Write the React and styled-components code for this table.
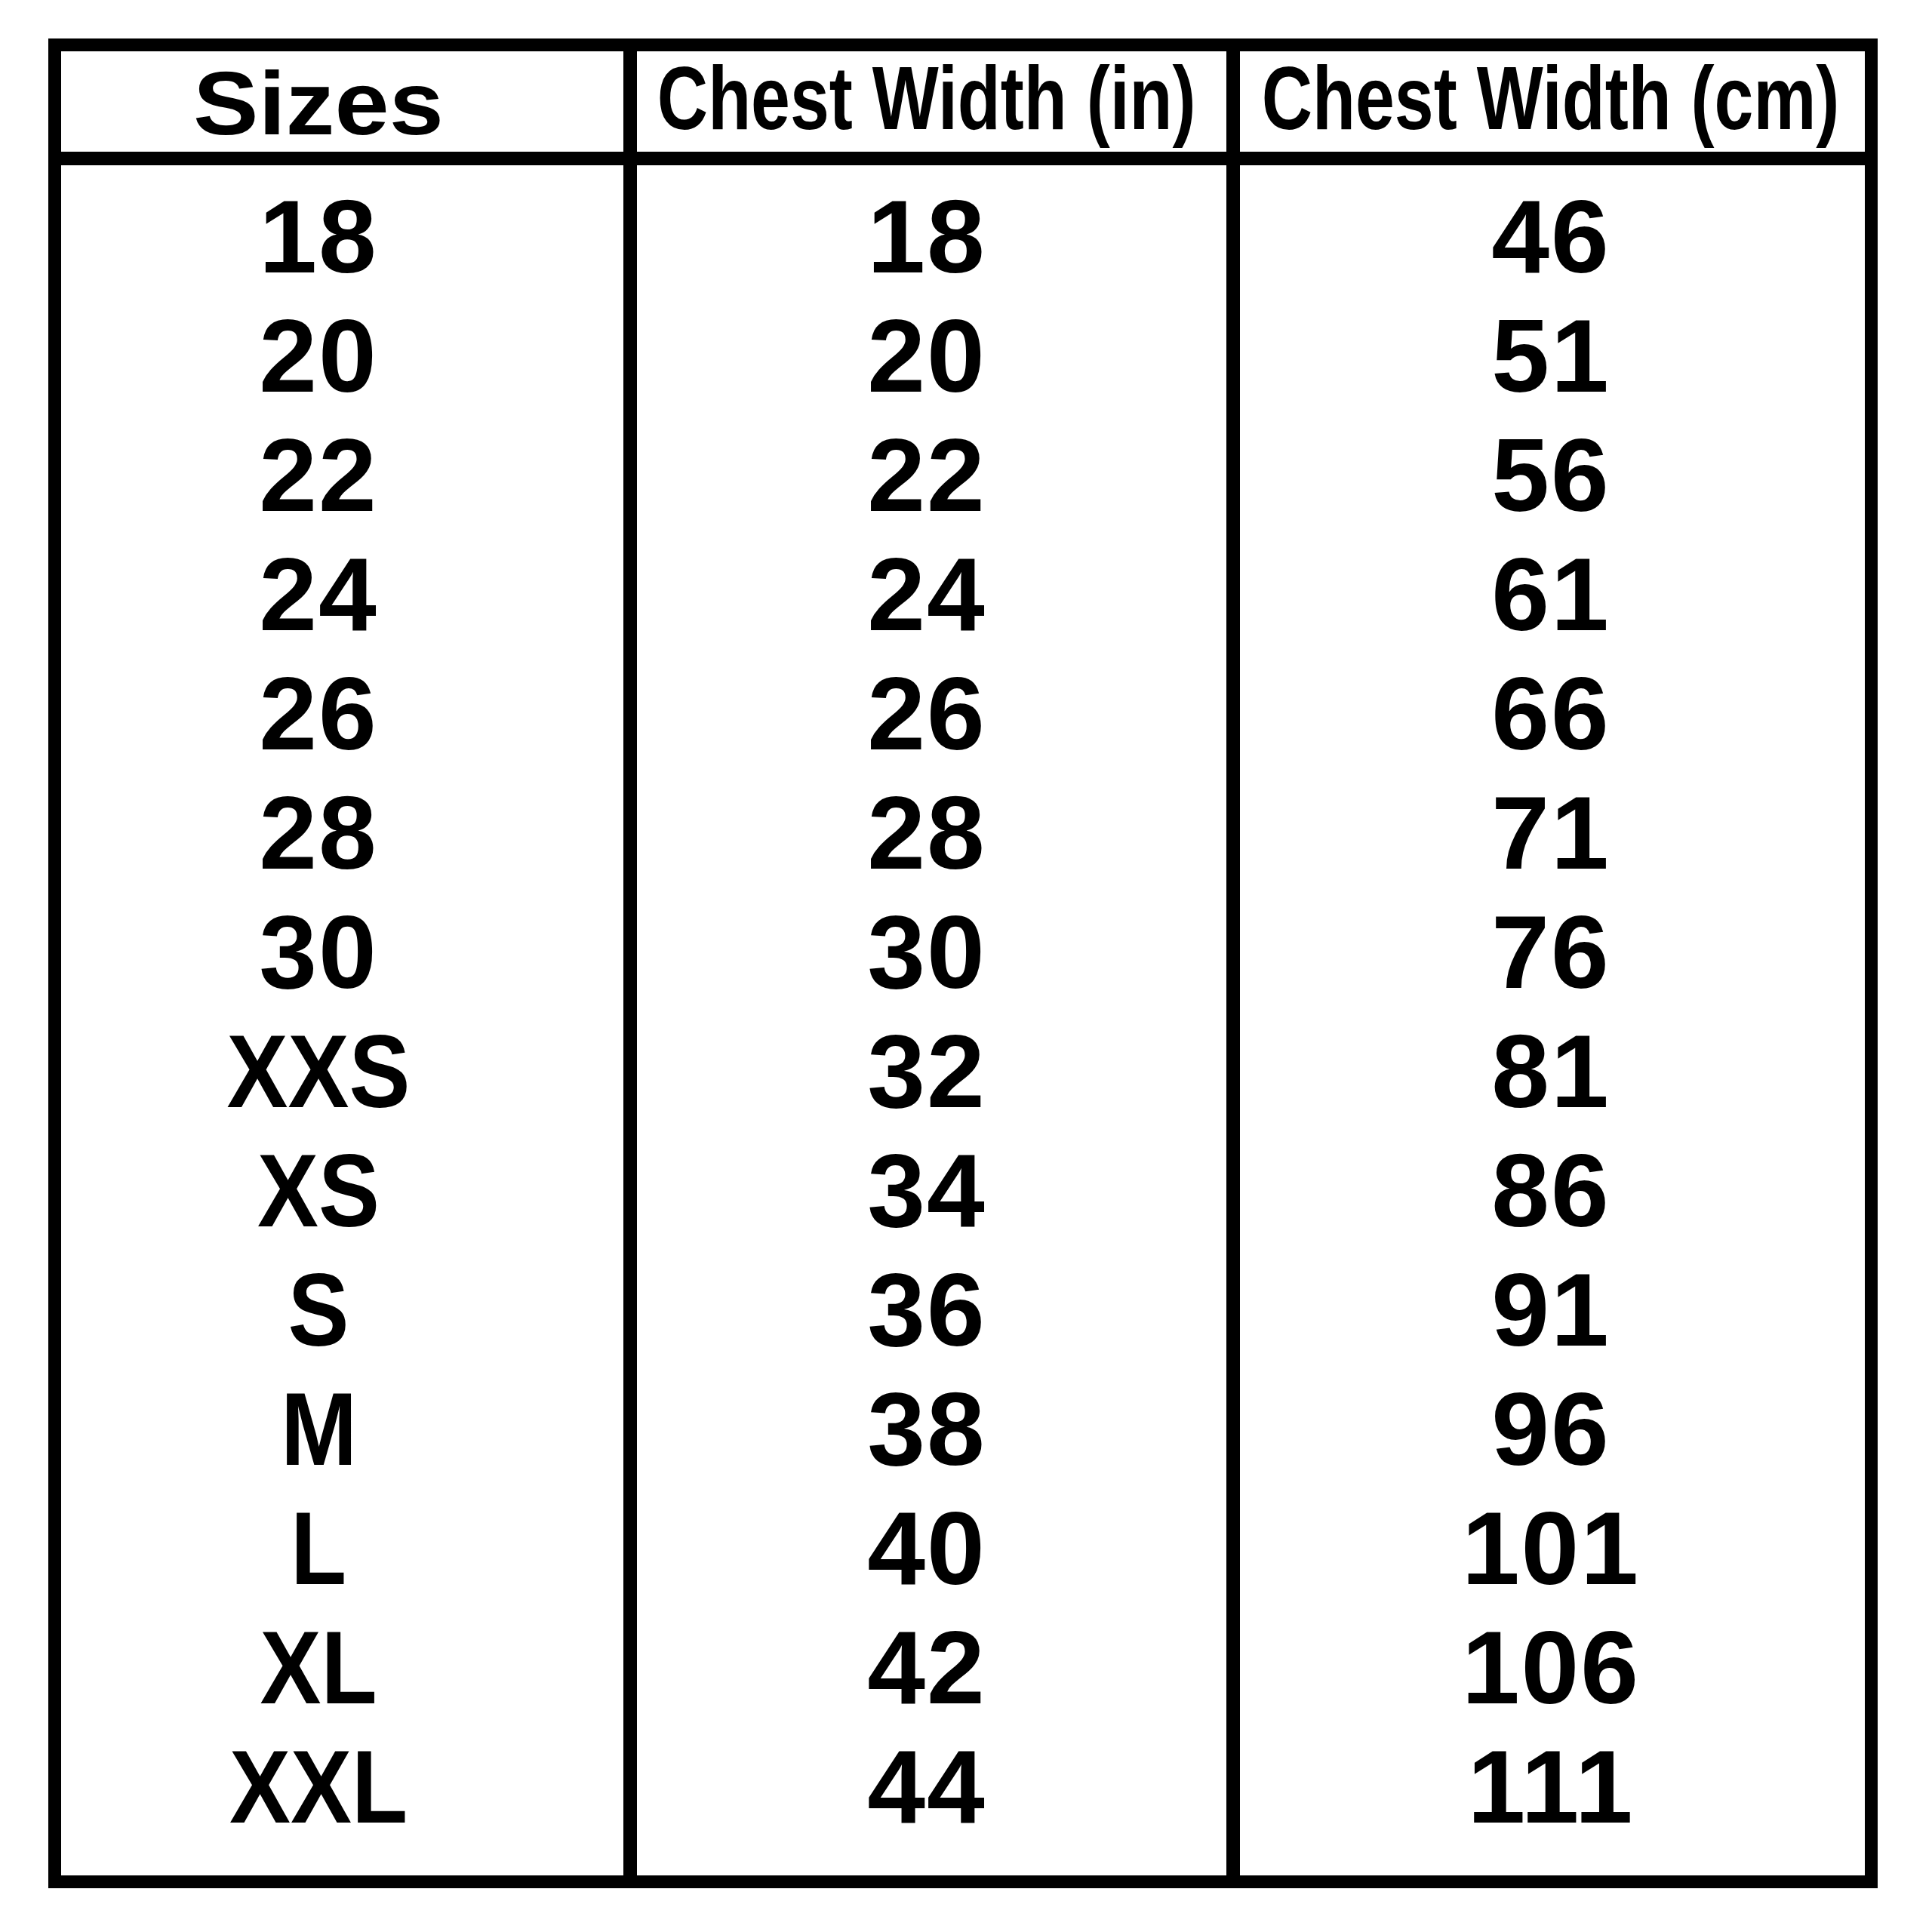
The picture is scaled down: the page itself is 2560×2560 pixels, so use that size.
import React from 'react';
import styled, { createGlobalStyle } from 'styled-components';

const GlobalStyle = createGlobalStyle`
  body {
    margin: 0;
    background: #fff;
    font-family: "Liberation Sans", Arial, sans-serif;
  }
`;

const rows = [
  ['18', '18', '46'],
  ['20', '20', '51'],
  ['22', '22', '56'],
  ['24', '24', '61'],
  ['26', '26', '66'],
  ['28', '28', '71'],
  ['30', '30', '76'],
  ['XXS', '32', '81'],
  ['XS', '34', '86'],
  ['S', '36', '91'],
  ['M', '38', '96'],
  ['L', '40', '101'],
  ['XL', '42', '106'],
  ['XXL', '44', '111'],
];

const columns = [
  { title: 'Sizes', offset: 63, stretch: 1.1, lift: 8 },
  { title: 'Chest Width (in)', offset: 13, stretch: 0.79, lift: 1 },
  { title: 'Chest Width (cm)', offset: 4, stretch: 0.79, lift: 1 },
];

const isLetters = (v) => /[A-Z]/.test(v);

function SizeChart() {
  return (
    <Page>
      <Table>
        {columns.map((col) => (
          <HeadCell key={col.title} $offset={col.offset} $lift={col.lift}>
            <HeadText $stretch={col.stretch}>{col.title}</HeadText>
          </HeadCell>
        ))}

        {columns.map((col, c) => (
          <BodyCell key={c} $offset={col.offset}>
            {rows.map((r, i) => (
              <Value key={i}>
                <ValueText $letters={isLetters(r[c])}>{r[c]}</ValueText>
              </Value>
            ))}
          </BodyCell>
        ))}
      </Table>
    </Page>
  );
}

export default function App() {
  return (
    <>
      <GlobalStyle />
      <SizeChart />
    </>
  );
}

const Page = styled.div`
  padding: 51px 0 0 64px;
  width: 2560px;
  height: 2560px;
  box-sizing: border-box;
`;

const Table = styled.div`
  display: grid;
  grid-template-columns: 745px 781px 828px;
  grid-template-rows: 133px 2266px;
  gap: 18px;
  padding: 17px;
  background: #000;
  width: max-content;
`;

const HeadCell = styled.div`
  background: #fff;
  display: flex;
  justify-content: center;
  align-items: flex-start;
  padding-top: ${(p) => p.$lift}px;
  padding-right: ${(p) => p.$offset}px;
  box-sizing: border-box;
`;

const HeadText = styled.span`
  display: inline-block;
  font-size: 118px;
  font-weight: 700;
  line-height: 122px;
  color: #000;
  white-space: nowrap;
  transform: scaleX(${(p) => p.$stretch});
  transform-origin: center;
`;

const BodyCell = styled.div`
  background: #fff;
  display: flex;
  flex-direction: column;
  padding-top: 15px;
  padding-right: ${(p) => p.$offset}px;
  box-sizing: border-box;
`;

const Value = styled.div`
  height: 158px;
  display: flex;
  align-items: center;
  justify-content: center;
`;

const ValueText = styled.span`
  display: inline-block;
  font-size: 138px;
  font-weight: 700;
  line-height: 158px;
  color: #000;
  letter-spacing: ${(p) => (p.$letters ? '0' : '2px')};
  transform: scaleX(${(p) => (p.$letters ? 0.88 : 1)});
`;
